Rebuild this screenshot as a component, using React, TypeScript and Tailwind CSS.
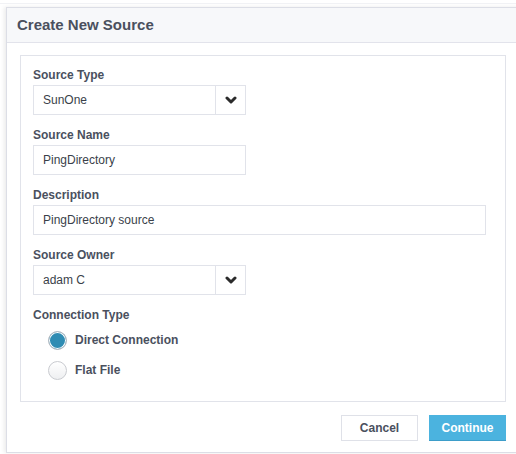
import React from "react";

const labelCls = "block h-[16px] leading-[16px] text-[12px] font-bold text-[#4a505e]";
const inputCls =
  "h-[30px] border border-[#e1e3ea] bg-white text-[12px] text-[#3a3f4a] flex items-center pl-[9px]";

function Chevron() {
  return (
    <svg width="12" height="9" viewBox="0 0 12 9" className="block">
      <polyline
        points="2,2 6,6 10,2"
        fill="none"
        stroke="#2b2b2b"
        strokeWidth="3"
        strokeLinecap="round"
        strokeLinejoin="round"
      />
    </svg>
  );
}

function Select({ value }: { value: string }) {
  return (
    <div className="w-[213px] h-[30px] border border-[#e1e3ea] bg-white flex text-[12px] text-[#3a3f4a]">
      <div className="flex-1 flex items-center pl-[9px]">{value}</div>
      <div className="w-[30px] border-l border-[#e1e3ea] flex items-center justify-center">
        <Chevron />
      </div>
    </div>
  );
}

function Field({ label, children }: { label: string; children: React.ReactNode }) {
  return (
    <div className="flex flex-col gap-[2px]">
      <span className={labelCls}>{label}</span>
      {children}
    </div>
  );
}

function Radio({ checked, label }: { checked?: boolean; label: string }) {
  return (
    <div className="flex items-center h-[20px] ml-[15px] gap-[8px]">
      {checked ? (
        <span className="w-[19px] h-[19px] rounded-full border border-[#b9bcc2] bg-[#2f8cb3] shadow-[inset_0_0_0_1px_#ffffff]" />
      ) : (
        <span className="w-[19px] h-[19px] rounded-full border border-[#c9cbd0] bg-gradient-to-b from-white to-[#eeeff1]" />
      )}
      <span className="text-[12px] font-bold text-[#4a505e]">{label}</span>
    </div>
  );
}

export default function App() {
  return (
    <div className="w-[516px] h-[454px] overflow-hidden bg-white relative font-['Liberation_Sans',Arial,sans-serif]">
      <div className="absolute left-0 right-0 top-[3px] h-px bg-[#f1f2f5]" />
      <div className="relative pt-[7px] pl-[6px]">
        <div className="w-[516px] h-[446px] bg-white border border-[#dcdee6] shadow-[-2px_0_4px_rgba(0,0,0,0.08)] flex flex-col">
          <div className="h-[35px] bg-[#f7f8fa] border-b border-[#e2e3eb] flex items-center pl-[10px] text-[15px] font-bold text-[#4a505e]">
            Create New Source
          </div>
          <div className="pt-[12px] pl-[13px] flex flex-col">
            <div className="w-[486px] border border-[#e1e3ea] pt-[11px] pl-[12px] pb-[21px] flex flex-col">
              <div className="flex flex-col gap-[12px]">
                <Field label="Source Type">
                  <Select value="SunOne" />
                </Field>
                <Field label="Source Name">
                  <div className={inputCls + " w-[213px]"}>PingDirectory</div>
                </Field>
                <Field label="Description">
                  <div className={inputCls + " w-[453px]"}>PingDirectory source</div>
                </Field>
                <Field label="Source Owner">
                  <Select value="adam C" />
                </Field>
                <span className={labelCls}>Connection Type</span>
              </div>
              <div className="mt-[7px] flex flex-col gap-[10px]">
                <Radio checked label="Direct Connection" />
                <Radio label="Flat File" />
              </div>
            </div>
            <div className="w-[486px] mt-[13px] flex justify-end gap-[11px]">
              <button className="w-[77px] h-[26px] border border-[#dfe1e8] bg-white text-[12px] font-bold text-[#4a505e]">
                Cancel
              </button>
              <button className="w-[77px] h-[26px] bg-[#4bb3df] border-b border-[#3d9dc9] text-[12px] font-bold text-white">
                Continue
              </button>
            </div>
          </div>
        </div>
      </div>
    </div>
  );
}
